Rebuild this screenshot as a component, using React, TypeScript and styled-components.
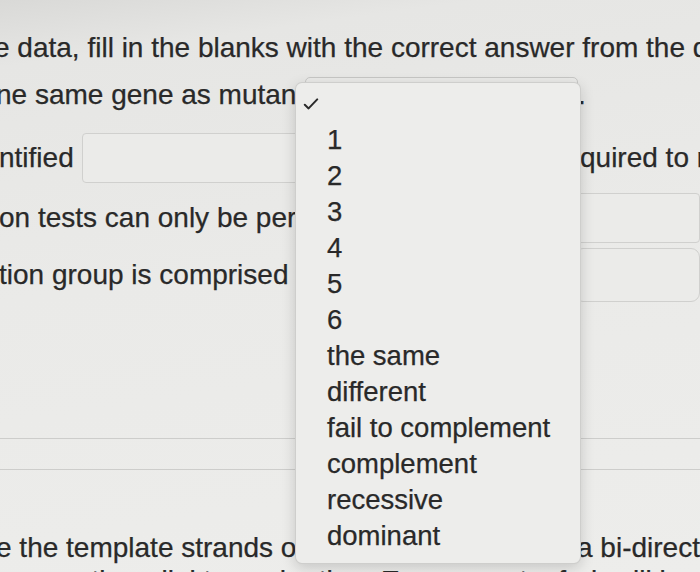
import styled, { createGlobalStyle } from "styled-components";

const GlobalStyle = createGlobalStyle`
  html, body {
    margin: 0;
    padding: 0;
    background: #e9e9e7;
  }
  body {
    font-family: "Liberation Sans", Arial, Helvetica, sans-serif;
    color: #292929;
    -webkit-text-stroke: 0.25px #292929;
  }
`;

const Page = styled.div`
  width: 700px;
  height: 572px;
  overflow: hidden;
  position: relative;
  background: linear-gradient(172deg, #d9d9d7 0%, #e6e6e4 10%, #eaeae8 45%, #ededeb 100%);
  font-size: 28px;
  padding-top: 30px;
  box-sizing: border-box;
`;

const Line = styled.div<{ $indent?: number }>`
  height: 36px;
  line-height: 36px;
  white-space: nowrap;
  text-indent: ${(p) => p.$indent ?? 0}px;
`;

const Row = styled.div<{ $top: number; $height: number; $cols: string }>`
  margin-top: ${(p) => p.$top}px;
  height: ${(p) => p.$height}px;
  display: grid;
  grid-template-columns: ${(p) => p.$cols};
  align-items: center;
`;

const Cell = styled.div`
  display: flex;
  align-items: center;
  height: 100%;
  min-width: 0;
`;

const Text = styled.span<{ $indent?: number }>`
  line-height: 36px;
  white-space: nowrap;
  margin-left: ${(p) => p.$indent ?? 0}px;
`;

const Field = styled.div<{ $radius?: number }>`
  height: 100%;
  box-sizing: border-box;
  border: 1px solid #d0d0ce;
  border-radius: ${(p) => p.$radius ?? 4}px;
  background: #ebebe9;
`;

const InlineField = styled(Field)`
  flex: 1;
  margin: 0 8px 0 8px;
`;

const SideField = styled(Field)<{ $shift?: number }>`
  width: calc(100% + 40px);
  margin-left: ${(p) => p.$shift ?? 0}px;
`;

const SelectWrap = styled.div`
  position: relative;
  height: 36px;
`;

const SelectBox = styled.div`
  height: 36px;
  margin-left: 12px;
  margin-right: 6px;
  box-sizing: border-box;
  border: 1px solid #c7c7c5;
  border-radius: 5px;
  background: #eaeae8;
`;

const Popup = styled.ul`
  position: absolute;
  left: 2px;
  top: 5px;
  width: 286px;
  margin: 0;
  padding: 3px 0 9px;
  list-style: none;
  box-sizing: border-box;
  background: #ededeb;
  border: 1px solid rgba(0, 0, 0, 0.13);
  border-radius: 7px;
  box-shadow: 0 4px 14px rgba(0, 0, 0, 0.16);
  z-index: 10;
`;

const Option = styled.li`
  position: relative;
  height: 36px;
  line-height: 36px;
  padding-left: 31px;
  font-size: 27.5px;
  color: #292929;
  white-space: nowrap;
`;

const Check = styled.svg`
  position: absolute;
  left: 7px;
  top: 12px;
`;

const Rules = styled.div`
  margin-top: 136px;
  height: 32px;
  box-sizing: border-box;
  border-top: 1px solid #cdcdcb;
  border-bottom: 1px solid #cdcdcb;
`;

const Para = styled.div`
  margin-top: 61px;
  line-height: 33px;
  white-space: nowrap;
`;

const ParaLine = styled.div<{ $cols?: string }>`
  display: grid;
  grid-template-columns: ${(p) => p.$cols ?? "1fr"};
`;

const options = [
  "1",
  "2",
  "3",
  "4",
  "5",
  "6",
  "the same",
  "different",
  "fail to complement",
  "complement",
  "recessive",
  "dominant",
];

export default function App() {
  return (
    <>
      <GlobalStyle />
      <Page>
        <Line $indent={-6}>
          e data, fill in the blanks with the correct answer from the drop-down menus.
        </Line>

        <Row $top={11} $height={36} $cols="293px 291px 1fr">
          <Cell>
            <Text $indent={-4}>ne same gene as mutan</Text>
          </Cell>
          <SelectWrap>
            <SelectBox />
            <Popup>
              <Option>
                <Check width="16" height="12" viewBox="0 0 16 12">
                  <path
                    d="M1.8 6.8 L5.6 10.4 L14.2 1.4"
                    fill="none"
                    stroke="#2a2a2a"
                    strokeWidth="2"
                    strokeLinecap="round"
                    strokeLinejoin="round"
                  />
                </Check>
              </Option>
              {options.map((o) => (
                <Option key={o}>{o}</Option>
              ))}
            </Popup>
          </SelectWrap>
          <Cell>
            <Text $indent={-6}>.</Text>
          </Cell>
        </Row>

        <Row $top={20} $height={50} $cols="580px 1fr">
          <Cell>
            <Text $indent={-1}>ntified</Text>
            <InlineField />
          </Cell>
          <Cell>
            <Text>quired to reach</Text>
          </Cell>
        </Row>

        <Row $top={10} $height={50} $cols="578px 1fr">
          <Cell>
            <Text $indent={-1}>on tests can only be performed</Text>
          </Cell>
          <Cell>
            <SideField $shift={-8} />
          </Cell>
        </Row>

        <Row $top={5} $height={54} $cols="574px 1fr">
          <Cell>
            <Text $indent={-1}>tion group is comprised</Text>
          </Cell>
          <Cell>
            <SideField $radius={9} />
          </Cell>
        </Row>

        <Rules />

        <Para>
          <ParaLine $cols="577px 1fr">
            <span style={{ marginLeft: -4 }}>e the template strands of DNA are</span>
            <span>a bi-directional</span>
          </ParaLine>
          <ParaLine>
            <span style={{ marginLeft: 12 }}>
              run antiparallel to each other. Enzymes at a fork will be
            </span>
          </ParaLine>
        </Para>
      </Page>
    </>
  );
}
